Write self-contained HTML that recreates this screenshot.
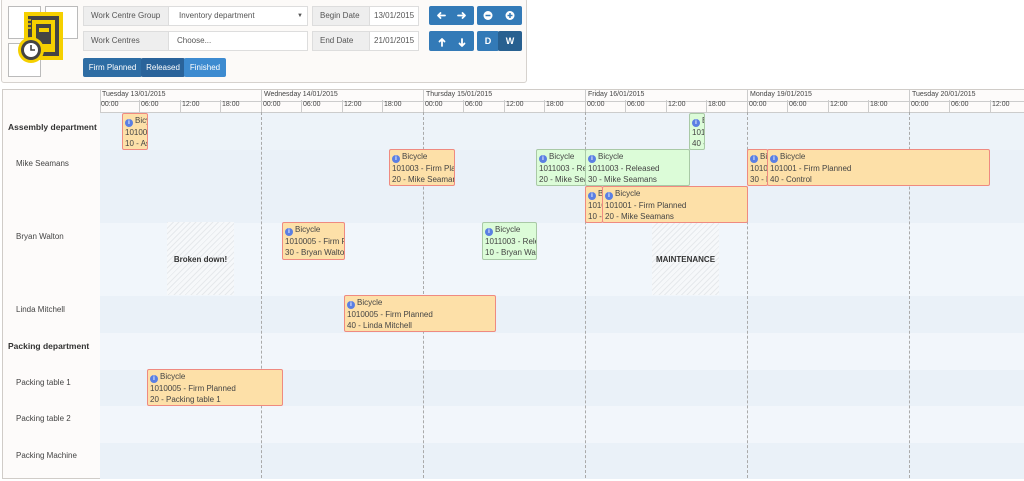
<!DOCTYPE html><html><head><style>
*{box-sizing:border-box;margin:0;padding:0}
body{width:1024px;height:481px;background:#fff;font-family:"Liberation Sans",sans-serif;position:relative;overflow:hidden;font-size:8px;color:#555}
.a{position:absolute}
.top{left:1px;top:-2px;width:526px;height:85px;background:#fcfaf8;border:1px solid #d6d2ce;border-radius:3px}
.sq{position:absolute;border:1px solid #bbb;background:#fff}
.lbl{position:absolute;background:#eee;border:1px solid #ddd;color:#555;padding-left:7px;line-height:18px;font-size:8px}
.inp{position:absolute;background:#fff;border:1px solid #ddd;color:#555;line-height:18px;font-size:8px}
.btn{position:absolute;background:#337ab7;color:#fff;text-align:center;font-weight:bold;font-size:9px;line-height:20px;border-radius:2px}
.grid{left:2px;top:89px;width:1022px;height:390px;border:1px solid #d0ccc8;background:#fdfbfa}
.rl{position:absolute;font-size:8px;color:#444}
.ev{position:absolute;border:1px solid #ef8a80;background:#fde0a8;border-radius:2px;font-size:8px;color:#444;line-height:11.3px;padding:1px 0 0 2px;overflow:hidden;white-space:nowrap}
.ev.g{background:#dcfcd8;border-color:#a9c9a6}
.i{display:inline-block;width:8px;height:8px;border-radius:50%;background:#5b7fe3;vertical-align:-1px;margin-right:2px;color:#fff;font-size:6px;text-align:center;line-height:8px;font-weight:bold}
.hat{position:absolute;background:repeating-linear-gradient(135deg,#e6e9ec 0 1px,#f6f8fa 1px 4px);font-weight:bold;color:#333;font-size:8px;text-align:center}
.dl{position:absolute;width:0;height:366px;border-left:1px dashed #aaa}
</style></head><body>
<div class="a top"></div>
<div class="sq" style="left:8px;top:6px;width:33px;height:33px"></div>
<div class="sq" style="left:45px;top:6px;width:33px;height:33px"></div>
<div class="sq" style="left:8px;top:43px;width:33px;height:34px"></div>
<svg class="a" style="left:17px;top:12px" width="48" height="52" viewBox="0 0 48 52"><rect x="7" y="0" width="39" height="48" fill="#f5d000"/><rect x="11" y="4" width="31" height="40" fill="#444"/><rect x="15" y="8" width="23" height="32" fill="#f5d000"/><rect x="19" y="12" width="15" height="20" fill="#444"/><rect x="22" y="16" width="10" height="4" fill="#f5d000"/><path d="M11 8h3M11 12h3M11 16h3" stroke="#f5d000" stroke-width="1.5"/><circle cx="14" cy="38" r="13" fill="#f5d000"/><circle cx="14" cy="38" r="10" fill="#444"/><circle cx="14" cy="38" r="7" fill="#fff"/><path d="M14 33v5h4" stroke="#444" stroke-width="1.6" fill="none"/></svg>
<div class="lbl" style="left:83px;top:6px;width:86px;height:20px">Work Centre Group</div>
<div class="inp" style="left:168px;top:6px;width:140px;height:20px;padding-left:10px">Inventory department<span style="position:absolute;right:4px;font-size:6px">▼</span></div>
<div class="lbl" style="left:83px;top:31px;width:86px;height:20px">Work Centres</div>
<div class="inp" style="left:168px;top:31px;width:140px;height:20px;padding-left:8px">Choose...</div>
<div class="lbl" style="left:312px;top:6px;width:58px;height:20px">Begin Date</div>
<div class="inp" style="left:369px;top:6px;width:50px;height:20px;padding-left:4px">13/01/2015</div>
<div class="lbl" style="left:312px;top:31px;width:58px;height:20px">End Date</div>
<div class="inp" style="left:369px;top:31px;width:50px;height:20px;padding-left:4px">21/01/2015</div>
<div class="btn" style="left:429px;top:6px;width:45px;height:19px"></div>
<div class="btn" style="left:477px;top:6px;width:45px;height:19px"></div>
<div class="btn" style="left:429px;top:31px;width:45px;height:20px"></div>
<div class="btn" style="left:477px;top:31px;width:22px;height:20px">D</div>
<div class="btn" style="left:498px;top:31px;width:24px;height:20px;background:#286090">W</div>
<svg class="a" style="left:429px;top:6px" width="93" height="45"><g stroke="#fff" stroke-width="1.8" fill="none" stroke-linecap="round" stroke-linejoin="round"><path d="M9 9.5h7M11.5 7l-2.5 2.5 2.5 2.5"/><path d="M29 9.5h7M33.5 7l2.5 2.5-2.5 2.5"/><path d="M13 40v-7M10.5 35.5l2.5-2.5 2.5 2.5"/><path d="M33 33v7M30.5 37.5l2.5 2.5 2.5-2.5"/></g><circle cx="59" cy="9.5" r="4.5" fill="#fff"/><path d="M56.5 9.5h5" stroke="#337ab7" stroke-width="1.5"/><circle cx="81" cy="9.5" r="4.5" fill="#fff"/><path d="M78.5 9.5h5M81 7v5" stroke="#337ab7" stroke-width="1.5"/></svg>
<div class="btn" style="left:83px;top:58px;width:59px;height:19px;font-weight:normal;font-size:8px;background:#2e6da4">Firm Planned</div>
<div class="btn" style="left:141px;top:58px;width:44px;height:19px;font-weight:normal;font-size:8px;background:#2a639a">Released</div>
<div class="btn" style="left:184px;top:58px;width:42px;height:19px;font-weight:normal;font-size:8px;background:#3d8bd0">Finished</div>

<div class="a grid">
<div class="a" style="left:97px;top:0;width:925px;height:23px;background:#fdfbfa;border-left:1px solid #ccc;border-bottom:1px solid #ccc"></div>
<div class="a" style="left:97px;top:11px;width:925px;height:0;border-top:1px solid #ccc"></div>
<div class="a" style="left:97px;top:23px;width:925px;height:366px;background:#edf3f9"></div>
<div class="a" style="left:97px;top:60px;width:925px;height:73px;background:#eaf1f8"></div>
<div class="a" style="left:97px;top:133px;width:925px;height:73px;background:#f1f6fb"></div>
<div class="a" style="left:97px;top:206px;width:925px;height:37px;background:#eaf1f8"></div>
<div class="a" style="left:97px;top:243px;width:925px;height:37px;background:#f2f6fb"></div>
<div class="a" style="left:97px;top:280px;width:925px;height:36px;background:#eaf1f8"></div>
<div class="a" style="left:97px;top:316px;width:925px;height:37px;background:#f2f6fb"></div>
<div class="a" style="left:97px;top:353px;width:925px;height:36px;background:#eaf1f8"></div>
</div>
<div class="rl" style="left:8px;top:122px;font-weight:bold;font-size:8.5px;color:#333">Assembly department</div>
<div class="rl" style="left:16px;top:159px">Mike Seamans</div>
<div class="rl" style="left:16px;top:232px">Bryan Walton</div>
<div class="rl" style="left:16px;top:305px">Linda Mitchell</div>
<div class="rl" style="left:8px;top:341px;font-weight:bold;font-size:8.5px;color:#333">Packing department</div>
<div class="rl" style="left:16px;top:378px">Packing table 1</div>
<div class="rl" style="left:16px;top:414px">Packing table 2</div>
<div class="rl" style="left:16px;top:451px">Packing Machine</div>

<div class="hat" style="left:167px;top:222px;width:67px;height:73px;padding-top:33px">Broken down!</div>
<div class="hat" style="left:652px;top:222px;width:67px;height:73px;padding-top:33px">MAINTENANCE</div>

<div class="dl" style="left:261px;top:112px"></div>
<div class="dl" style="left:423px;top:112px"></div>
<div class="dl" style="left:585px;top:112px"></div>
<div class="dl" style="left:747px;top:112px"></div>
<div class="dl" style="left:909px;top:112px"></div>

<div class="ev" style="left:122px;top:113px;width:26px;height:37px"><span class="i">i</span>Bicycle<br>1010005<br>10 - Assembly</div>
<div class="ev g" style="left:689px;top:113px;width:16px;height:37px"><span class="i">i</span>B<br>101<br>40 -</div>
<div class="ev" style="left:389px;top:149px;width:66px;height:37px"><span class="i">i</span>Bicycle<br>101003 - Firm Planned<br>20 - Mike Seamans</div>
<div class="ev g" style="left:536px;top:149px;width:50px;height:37px"><span class="i">i</span>Bicycle<br>1011003 - Released<br>20 - Mike Seamans</div>
<div class="ev g" style="left:585px;top:149px;width:105px;height:37px"><span class="i">i</span>Bicycle<br>1011003 - Released<br>30 - Mike Seamans</div>
<div class="ev" style="left:747px;top:149px;width:21px;height:37px"><span class="i">i</span>Bicycle<br>101001<br>30 - M</div>
<div class="ev" style="left:767px;top:149px;width:223px;height:37px"><span class="i">i</span>Bicycle<br>101001 - Firm Planned<br>40 - Control</div>
<div class="ev" style="left:585px;top:186px;width:18px;height:37px"><span class="i">i</span>B<br>1010<br>10 -</div>
<div class="ev" style="left:602px;top:186px;width:146px;height:37px"><span class="i">i</span>Bicycle<br>101001 - Firm Planned<br>20 - Mike Seamans</div>
<div class="ev" style="left:282px;top:222px;width:63px;height:38px"><span class="i">i</span>Bicycle<br>1010005 - Firm Planned<br>30 - Bryan Walton</div>
<div class="ev g" style="left:482px;top:222px;width:55px;height:38px"><span class="i">i</span>Bicycle<br>1011003 - Released<br>10 - Bryan Walton</div>
<div class="ev" style="left:344px;top:295px;width:152px;height:37px"><span class="i">i</span>Bicycle<br>1010005 - Firm Planned<br>40 - Linda Mitchell</div>
<div class="ev" style="left:147px;top:369px;width:136px;height:37px"><span class="i">i</span>Bicycle<br>1010005 - Firm Planned<br>20 - Packing table 1</div>

<div class="a" style="left:99px;top:90px;width:925px;height:22px;font-size:7px;color:#444">
<div class="a" style="left:3px;top:1px">Tuesday 13/01/2015</div>
<div class="a" style="left:165px;top:1px">Wednesday 14/01/2015</div>
<div class="a" style="left:327px;top:1px">Thursday 15/01/2015</div>
<div class="a" style="left:489px;top:1px">Friday 16/01/2015</div>
<div class="a" style="left:651px;top:1px">Monday 19/01/2015</div>
<div class="a" style="left:813px;top:1px">Tuesday 20/01/2015</div>
</div>
<div class="a" style="left:99px;top:101px;width:925px;height:11px;font-size:7px;color:#444;white-space:nowrap">
<span class="a" style="left:2px">00:00</span><span class="a" style="left:42px">06:00</span><span class="a" style="left:83px">12:00</span><span class="a" style="left:123px">18:00</span>
<span class="a" style="left:164px">00:00</span><span class="a" style="left:204px">06:00</span><span class="a" style="left:245px">12:00</span><span class="a" style="left:285px">18:00</span>
<span class="a" style="left:326px">00:00</span><span class="a" style="left:366px">06:00</span><span class="a" style="left:407px">12:00</span><span class="a" style="left:447px">18:00</span>
<span class="a" style="left:488px">00:00</span><span class="a" style="left:528px">06:00</span><span class="a" style="left:569px">12:00</span><span class="a" style="left:609px">18:00</span>
<span class="a" style="left:650px">00:00</span><span class="a" style="left:690px">06:00</span><span class="a" style="left:731px">12:00</span><span class="a" style="left:771px">18:00</span>
<span class="a" style="left:812px">00:00</span><span class="a" style="left:852px">06:00</span><span class="a" style="left:893px">12:00</span>
</div>
<svg class="a" style="left:99px;top:89px" width="925" height="24">
<g stroke="#ccc" stroke-width="1">
<path d="M162.5 0V23M324.5 0V23M486.5 0V23M648.5 0V23M810.5 0V23"/>
<path d="M40.5 11V23M81.5 11V23M121.5 11V23M202.5 11V23M243.5 11V23M283.5 11V23M364.5 11V23M405.5 11V23M445.5 11V23M526.5 11V23M567.5 11V23M607.5 11V23M688.5 11V23M729.5 11V23M769.5 11V23M850.5 11V23M891.5 11V23"/>
</g></svg>
</body></html>
